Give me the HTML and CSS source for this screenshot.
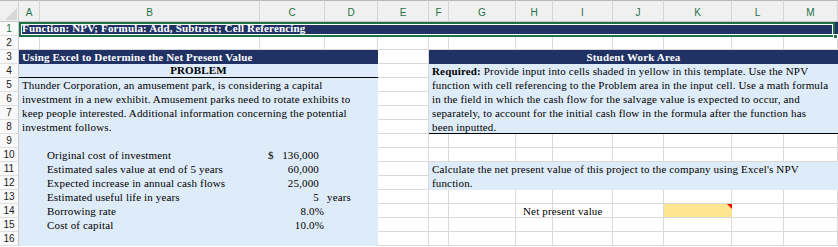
FILE: index.html
```html
<!DOCTYPE html>
<html lang="en">
<head>
<meta charset="utf-8">
<title>NPV worksheet</title>
<link rel="stylesheet" href="styles.css">
</head>
<body>
<div class="sheet">
  <div class="corner"><svg width="19" height="21" viewBox="0 0 19 21"><polygon points="17,7 17,19 5,19" fill="#d6d6d6"/></svg></div>
  <div class="ch">A</div><div class="ch">B</div><div class="ch">C</div><div class="ch">D</div><div class="ch">E</div><div class="ch">F</div><div class="ch">G</div><div class="ch">H</div><div class="ch">I</div><div class="ch">J</div><div class="ch">K</div><div class="ch">L</div><div class="ch">M</div>

  <div class="rh sel">1</div><div class="rh">2</div><div class="rh">3</div><div class="rh">4</div><div class="rh">5</div><div class="rh">6</div><div class="rh">7</div><div class="rh">8</div><div class="rh">9</div><div class="rh">10</div><div class="rh">11</div><div class="rh">12</div><div class="rh">13</div><div class="rh">14</div><div class="rh">15</div><div class="rh">16</div>

  <div class="lines">
    <div></div><div></div><div></div><div></div><div></div><div></div><div></div><div></div><div></div><div></div><div></div><div></div><div></div>
  </div>

  <div class="title">Function: NPV; Formula: Add, Subtract; Cell Referencing</div>

  <div class="band band-left">Using Excel to Determine the Net Present Value</div>
  <div class="band band-right">Student Work Area</div>

  <div class="blue-left"></div>
  <div class="problem">PROBLEM</div>
  <div class="para para-left">Thunder Corporation, an amusement park, is considering a capital<br>investment in a new exhibit. Amusement parks need to rotate exhibits to<br>keep people interested. Additional information concerning the potential<br>investment follows.</div>

  <div class="label r10">Original cost of investment</div>
  <div class="val r10 money"><span>$</span><span>136,000</span></div>
  <div class="label r11">Estimated sales value at end of 5 years</div>
  <div class="val r11">60,000</div>
  <div class="label r12">Expected increase in annual cash flows</div>
  <div class="val r12">25,000</div>
  <div class="label r13">Estimated useful life in years</div>
  <div class="val r13">5</div>
  <div class="unit r13">years</div>
  <div class="label r14">Borrowing rate</div>
  <div class="val pct r14">8.0%</div>
  <div class="label r15">Cost of capital</div>
  <div class="val pct r15">10.0%</div>

  <div class="para required"><b>Required:</b> Provide input into cells shaded in yellow in this template. Use the NPV<br>function with cell referencing to the Problem area in the input cell. Use a math formula<br>in the field in which the cash flow for the salvage value is expected to occur, and<br>separately, to account for the initial cash flow in the formula after the function has<br>been inputted.</div>

  <div class="para calc">Calculate the net present value of this project to the company using Excel's NPV<br>function.</div>

  <div class="npv-label">Net present value</div>
  <div class="input-cell"></div>

  <div class="selection"><span class="handle"></span></div>
</div>
</body>
</html>
```

FILE: styles.css
```css
* { box-sizing: border-box; }
html, body { margin: 0; padding: 0; background: #fff; overflow: hidden; }

.sheet {
  --cols: 21px 220px 65px 53px 51px 20px 67px 37px 60px 51px 68px 52px 1fr;
  position: relative;
  display: grid;
  grid-template-columns: 19px var(--cols);
  grid-template-rows: 22px repeat(16, 14px);
  width: 838px;
  height: 247px;
  font-family: "Liberation Serif", "Times New Roman", serif;
  font-size: 11px;
  letter-spacing: 0.15px;
  color: #000;
}
b { letter-spacing: 0.16px; }

/* headers */
.corner {
  grid-row: 1;
  grid-column: 1;
  background: #f0f0f0;
  border-top: 1px solid #b8b8b8;
  border-bottom: 1px solid #c6c6c6;
  border-right: 1px solid #d0d0d0;
  overflow: hidden;
}
.corner svg { display: block; }
.ch {
  grid-row: 1;
  background: #f0f0f0;
  border-top: 1px solid #b8b8b8;
  border-bottom: 1px solid #c6c6c6;
  border-right: 1px solid #d3d3d3;
  color: #1e7046;
  font-family: "Liberation Sans", Arial, sans-serif;
  font-size: 10px;
  letter-spacing: 0;
  display: flex;
  align-items: center;
  justify-content: center;
  padding-top: 2px;
}
.rh {
  grid-column: 1;
  background: #f9f9f9;
  border-right: 1px solid #c9c9c9;
  border-bottom: 1px solid #e0e0e0;
  font-family: "Liberation Sans", Arial, sans-serif;
  font-size: 10px;
  letter-spacing: 0;
  color: #222;
  display: flex;
  align-items: center;
  justify-content: center;
}
.rh.sel { color: #1e7046; }

/* gridlines */
.lines {
  grid-row: 2 / -1;
  grid-column: 2 / -1;
  display: grid;
  grid-template-columns: var(--cols);
  background: repeating-linear-gradient(to bottom, transparent 0 13px, #d9d9d9 13px 14px);
}
.lines div { border-right: 1px solid #d9d9d9; }

/* content */
.title {
  grid-row: 2;
  grid-column: 2 / -1;
  background: #1f3263;
  color: #fff;
  font-weight: bold;
  letter-spacing: 0.16px;
  padding-left: 3px;
  line-height: 13px;
  white-space: nowrap;
}
.band {
  grid-row: 4;
  background: #1f3263;
  color: #fff;
  font-weight: bold;
  letter-spacing: 0.16px;
  line-height: 14px;
  white-space: nowrap;
}
.band-left { grid-column: 2 / 6; padding-left: 3px; }
.band-right { grid-column: 7 / -1; text-align: center; }

.blue-left {
  grid-row: 5 / 18;
  grid-column: 2 / 6;
  background: #deecf9;
}
.problem {
  grid-row: 5;
  grid-column: 2 / 6;
  text-align: center;
  font-weight: bold;
  letter-spacing: 0.16px;
  line-height: 13px;
  border-bottom: 1px solid #000;
}
.para {
  line-height: 14px;
  padding-left: 3px;
  white-space: nowrap;
}
.para-left { grid-row: 6 / 10; grid-column: 2 / 6; }

.label { grid-column: 3; padding-left: 7px; line-height: 14px; white-space: nowrap; }
.val { grid-column: 4; text-align: right; padding-right: 6px; line-height: 14px; white-space: nowrap; }
.val.pct { padding-right: 1px; }
.money { display: flex; justify-content: space-between; padding-left: 8px; }
.unit { grid-column: 5; padding-left: 2px; line-height: 14px; }
.r10 { grid-row: 11; }
.r11 { grid-row: 12; }
.r12 { grid-row: 13; }
.r13 { grid-row: 14; }
.r14 { grid-row: 15; }
.r15 { grid-row: 16; }

.required {
  grid-row: 5 / 10;
  grid-column: 7 / -1;
  background: #deecf9;
  border-bottom: 1px solid #000;
  line-height: 14px;
}
.calc {
  grid-row: 12 / 14;
  grid-column: 7 / -1;
  background: #deecf9;
}
.npv-label {
  grid-row: 15;
  grid-column: 9 / 11;
  padding-left: 7px;
  line-height: 14px;
  white-space: nowrap;
}
.input-cell {
  grid-row: 15;
  grid-column: 12;
  background: #fee590;
  margin-bottom: 1px;
  position: relative;
}
.input-cell::after {
  content: "";
  position: absolute;
  top: 0;
  right: 0;
  border-top: 5px solid #f00;
  border-left: 5px solid transparent;
}

/* active row selection overlay */
.selection {
  position: absolute;
  left: 19px;
  top: 22px;
  width: 816px;
  height: 15px;
  border: 2px solid #1e7145;
  box-shadow: inset 0 0 0 1px #fff;
}
.handle {
  position: absolute;
  right: -5px;
  bottom: -4px;
  width: 5px;
  height: 5px;
  background: #1e7145;
  border: 1px solid #fff;
}
```
